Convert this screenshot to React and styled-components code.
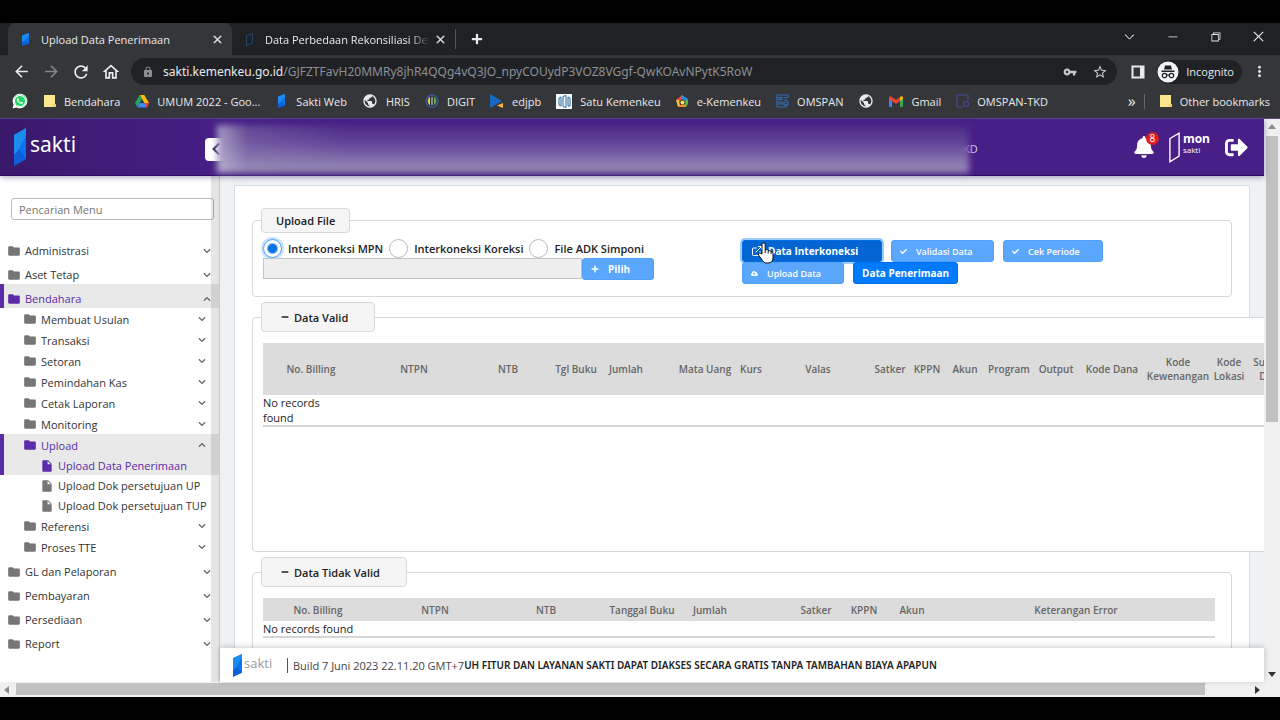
import React from 'react';
import styled, { createGlobalStyle, css } from 'styled-components';
import {
	FaBell,
	FaCheck,
	FaChevronDown,
	FaChevronLeft,
	FaChevronUp,
	FaCloudUploadAlt,
	FaMinus,
	FaPlus,
	FaSignOutAlt,
	FaWhatsapp
} from 'react-icons/fa';
import {
	MdArrowBack,
	MdArrowForward,
	MdFolder,
	MdInsertDriveFile,
	MdLock,
	MdMoreVert,
	MdOutlineHome,
	MdPublic,
	MdRefresh,
	MdStarOutline,
	MdVpnKey
} from 'react-icons/md';
import { VscChevronDown, VscChromeClose, VscChromeMinimize, VscChromeRestore } from 'react-icons/vsc';
import { ExternalLink } from 'lucide-react';

const GlobalStyle = createGlobalStyle`
	* {
		box-sizing: border-box;
	}

	body {
		margin: 0;
		background: #000;
		font-family: 'Open Sans', 'Noto Sans', sans-serif;
		font-size: 12px;
		color: #222;
	}

	button,
	input {
		font-family: inherit;
	}

	ul {
		list-style: none;
		margin: 0;
		padding: 0;
	}

	svg {
		flex: none;
		display: block;
	}
`;

const Screen = styled.div`
	display: flex;
	flex-direction: column;
	height: 100vh;
	padding: 23px 0;
	overflow: hidden;
`;

/* Browser chrome */

const TabStrip = styled.div`
	display: flex;
	align-items: stretch;
	flex: none;
	height: 32px;
	padding-left: 8px;
	background: #202124;
	color: #e8eaed;
`;

const Tab = styled.div`
	display: flex;
	align-items: center;
	width: 224px;
	padding: 0 9px 0 14px;
	border-radius: 8px 8px 0 0;
	background: ${props => (props.$active ? '#35363a' : 'transparent')};
	${props =>
		!props.$active &&
		css`
			border-right: 1px solid #55565a;
			border-radius: 0;
			margin: 6px 0;
		`};
`;

const TabTitle = styled.span`
	flex: 1;
	margin: 0 4px 0 12px;
	overflow: hidden;
	white-space: nowrap;
	font-size: 11px;
	${props =>
		props.$fade &&
		css`
			mask-image: linear-gradient(90deg, #000 88%, transparent);
		`};
`;

const IconButton = styled.button`
	display: flex;
	align-items: center;
	justify-content: center;
	flex: none;
	width: ${props => props.$width || 30}px;
	padding: 0;
	border: 0;
	background: none;
	color: ${props => props.$color || '#e8eaed'};
`;

const WindowButtons = styled.div`
	display: flex;
	margin-left: auto;
	padding-bottom: 6px;
`;

const Toolbar = styled.div`
	display: flex;
	align-items: center;
	flex: none;
	height: 33px;
	padding: 0 4px 0 6px;
	background: #35363a;
	color: #e8eaed;
`;

const AddressBar = styled.div`
	display: flex;
	align-items: center;
	flex: 1;
	height: 27px;
	margin: 0 2px 0 5px;
	padding: 0 2px 0 11px;
	border-radius: 14px;
	background: #202124;
	color: #8c9095;
`;

const Url = styled.span`
	flex: 1;
	margin-left: 9px;
	font-family: 'Noto Sans', sans-serif;
	font-size: 12px;
	white-space: nowrap;

	b {
		font-weight: 400;
		color: #e8eaed;
	}
`;

const Incognito = styled.div`
	display: flex;
	align-items: center;
	gap: 7px;
	height: 24px;
	padding-right: 8px;
	border-radius: 12px;
	background: #202124;
	font-size: 11px;
`;

const BookmarkBar = styled.nav`
	display: flex;
	align-items: center;
	flex: none;
	gap: 15px;
	height: 31px;
	padding: 0 10px 4px 12px;
	border-bottom: 1px solid #5b4a85;
	background: #35363a;
`;

const Bookmark = styled.a`
	display: flex;
	align-items: center;
	gap: 8px;
	color: #e8eaed;
	font-size: 11px;
	text-decoration: none;
	white-space: nowrap;
`;

const BookmarkIcon = styled.span`
	display: flex;
	justify-content: center;
	min-width: 13px;
`;

const BookmarkEnd = styled.div`
	display: flex;
	align-items: center;
	gap: 8px;
	margin-left: auto;
	color: #e8eaed;
	font-size: 16px;
`;

const Divider = styled.span`
	width: 1px;
	height: ${props => props.$height}px;
	background: ${props => props.$color};
`;

/* Application */

const Viewport = styled.div`
	display: flex;
	flex: 1;
	min-height: 0;
`;

const Page = styled.div`
	display: flex;
	flex-direction: column;
	flex: 1;
	min-width: 0;
	background: #fff;
`;

const Header = styled.header`
	position: relative;
	z-index: 2;
	display: flex;
	align-items: center;
	flex: none;
	height: 57px;
	padding-right: 16px;
	background: linear-gradient(90deg, #38196a 0, #471f87 220px, #471f87 100%);
	border-bottom: 1px solid #2c0b63;
	box-shadow: 0 1px 6px rgba(60, 40, 110, 0.45);
	color: #fff;
`;

const Brand = styled.div`
	display: flex;
	align-items: center;
	gap: 4px;
	width: 205px;
	padding-left: 14px;
	font-family: 'Noto Sans', sans-serif;
	font-size: 21px;

	span {
		padding-bottom: 7px;
	}
`;

const MenuToggle = styled.button`
	display: flex;
	align-items: center;
	justify-content: center;
	width: 22px;
	height: 23px;
	margin-top: 4px;
	padding: 0;
	border: 0;
	border-radius: 4px;
	background: #fff;
	color: #2f2360;
`;

const BlurBand = styled.div`
	flex: 1;
	max-width: 752px;
	height: 48px;
	margin: 3px 0 0 -10px;
	background:
		linear-gradient(90deg, rgba(190, 182, 210, 0.8), rgba(150, 140, 185, 0.3) 30px, transparent 130px),
		linear-gradient(#4b2885, #64479a 40%, #8674ad 75%, #9c8eb8);
	filter: blur(3px);
`;

const HeaderActions = styled.div`
	display: flex;
	align-items: center;
	gap: 14px;
	margin-left: auto;
`;

const Account = styled.span`
	margin: 3px 0 0 -14px;
	font-size: 11px;
	color: #d9cfee;
`;

const Bell = styled.button`
	position: relative;
	padding: 0;
	border: 0;
	background: none;
	color: #fff;
`;

const Badge = styled.span`
	position: absolute;
	top: -4px;
	right: -4px;
	width: 13px;
	height: 13px;
	border-radius: 50%;
	background: #e01b24;
	font-size: 10px;
	line-height: 13px;
	text-align: center;
`;

const MonSakti = styled.a`
	display: flex;
	gap: 3px;
	color: #fff;
	text-decoration: none;
	font-size: 8px;

	small,
	strong {
		display: block;
		font-size: 12px;
		font-weight: 700;
		line-height: 14px;
	}

	small {
		font-size: 8px;
		font-weight: 400;
		line-height: 8px;
	}
`;

const Body = styled.div`
	display: flex;
	flex: 1;
	min-height: 0;
`;

const Sidebar = styled.aside`
	position: relative;
	flex: none;
	width: 220px;
	padding-top: 22px;
	border-right: 1px solid #c9c9c9;
	background: #fff;

	&::after {
		content: '';
		position: absolute;
		top: 0;
		right: 0;
		bottom: 0;
		width: 8px;
		background: rgba(0, 0, 0, 0.1);
		pointer-events: none;
	}
`;

const SearchInput = styled.input`
	display: block;
	width: 203px;
	height: 22px;
	margin: 0 0 16px 11px;
	padding: 0 7px;
	border: 1px solid #bdbdbd;
	border-radius: 3px;
	font-size: 11px;

	&::placeholder {
		color: #757575;
	}
`;

const levels = {
	1: css`
		height: 24px;
		padding: 5px 8px 0 7px;
	`,
	2: css`
		height: 21px;
		padding: 1px 13px 0 23px;
	`,
	3: css`
		height: 20px;
		padding: 1px 13px 0 40px;
	`
};

const MenuLink = styled.a`
	display: flex;
	align-items: center;
	gap: 4px;
	${props => levels[props.$level]};
	color: ${props => (props.$active ? '#5a2ca8' : '#333')};
	background: ${props => (props.$active ? '#e9e9e9' : 'transparent')};
	font-size: 11px;
	white-space: nowrap;
	text-decoration: none;

	${props =>
		props.$active &&
		css`
			box-shadow: inset 4px 0 0 #5a2ca8;
		`};

	> svg:first-child {
		color: ${props => (props.$active ? '#5a2ca8' : '#757575')};
	}

	> svg:nth-of-type(2) {
		margin-left: auto;
		color: #666;
	}
`;

const Main = styled.main`
	display: flex;
	flex-direction: column;
	flex: 1;
	min-width: 0;
	background: #eef2f5;
`;

const Content = styled.div`
	flex: 1;
	min-height: 0;
	padding: 9px 14px 0;
	overflow: hidden;
`;

const Card = styled.div`
	min-height: 100%;
	padding: 22px 17px;
	border: 1px solid #d5dde2;
	background: #fff;
`;

const Panel = styled.fieldset`
	width: ${props => (props.$wide ? 'max-content' : 'auto')};
	margin: 0 0 5px;
	padding: 0 16px ${props => props.$bottom || 12}px 8px;
	border: 1px solid #d9d9d9;
	border-radius: 4px;
	background: #fff;
`;

const PanelTitle = styled.legend`
	padding: 0 14px;
	border: 1px solid #d9d9d9;
	border-radius: 4px;
	background: #f5f5f5;
	color: #212121;
	font-size: 11px;
	font-weight: 600;
	line-height: 23px;
`;

const PanelToggle = styled.button`
	display: flex;
	align-items: center;
	gap: 5px;
	height: 28px;
	padding: 0 12px 0 5px;
	border: 0;
	background: none;
	color: inherit;
	font-size: 11px;
	font-weight: 600;
`;

const PanelBody = styled.div`
	padding: ${props => props.$top}px 0 0 2px;
`;

const Form = styled.form`
	display: grid;
	grid-template-columns: 479px 1fr;
`;

const Actions = styled.div`
	padding-top: 2px;
`;

const RadioRow = styled.div`
	display: flex;
	align-items: center;
	gap: 6px;
	height: 20px;
	white-space: nowrap;
`;

const Radio = styled.input`
	appearance: none;
	flex: none;
	width: 19px;
	height: 19px;
	margin: 0;
	border: 1px solid #bbb;
	border-radius: 50%;
	background: #fff;

	&:checked {
		border-color: #4b9bf0;
		background: radial-gradient(#0b74e5 0 4px, #fff 6px);
		box-shadow: 0 0 0 2px #c4e0ff;
	}
`;

const RadioLabel = styled.label`
	font-size: 11px;
	font-weight: 600;
`;

const FileRow = styled.div`
	display: flex;
`;

const FileName = styled.input`
	width: 319px;
	height: 21px;
	padding: 0 6px;
	border: 1px solid #c4c4c4;
	background: #eee;
`;

const ActionRow = styled.div`
	display: flex;
	gap: 9px;
	height: 22px;
`;

const Button = styled.button`
	position: relative;
	display: flex;
	align-items: center;
	flex: none;
	gap: ${props => props.$gap || 9}px;
	width: ${props => props.$width}px;
	height: 22px;
	padding: 0 8px;
	border: 1px solid ${props => (props.$strong ? '#006fe6' : '#4fa0fb')};
	border-radius: 3px;
	background: ${props => (props.$strong ? '#007bff' : '#5ba7fd')};
	color: #fff;
	font-size: ${props => props.$size || 9}px;
	font-weight: ${props => (props.$size ? 700 : 600)};
	white-space: nowrap;

	${props =>
		props.$focused &&
		css`
			background: #0364d2;
			box-shadow: 0 0 0 2px #9dccff;
		`};
`;

const Cursor = styled.svg`
	position: absolute;
	left: 14px;
	top: 0;
	z-index: 1;
`;

const Table = styled.table`
	width: ${props => (props.$width ? `${props.$width}px` : '100%')};
	table-layout: fixed;
	border-collapse: collapse;
	border-bottom: 2px solid #d6d6d6;

	th {
		height: ${props => props.$head}px;
		padding: 0;
		background: #dcdcdc;
		color: #666;
		font-size: 10px;
		font-weight: 600;
		line-height: 14px;
	}

	td {
		padding: 0 12px 0 0;
		font-size: 11px;
		line-height: 15px;
	}
`;

const Th = styled.th`
	width: ${props => (props.$width ? `${props.$width}px` : 'auto')};
	text-align: ${props => (props.$left ? 'left' : 'center')};

	&& {
		padding-left: ${props => (props.$left ? 4 : 0)}px;
	}
`;

const Footer = styled.footer`
	position: relative;
	display: flex;
	align-items: center;
	flex: none;
	height: 34px;
	padding-left: 13px;
	background: #fff;
	box-shadow: 0 -1px 6px rgba(0, 0, 0, 0.2);
	font-size: 11px;
	white-space: nowrap;

	strong {
		font-family: 'Noto Sans', sans-serif;
		font-size: 10px;
		font-weight: 600;
	}
`;

const FooterBrand = styled.span`
	width: 45px;
	padding: 0 0 4px 2px;
	color: #9a9aa2;
	font-size: 13px;
`;

const Build = styled.span`
	margin-left: 5px;
	color: #444;
`;

const VerticalBar = styled.div`
	display: flex;
	flex-direction: column;
	align-items: center;
	flex: none;
	width: 16px;
	padding: 4px 0;
	background: #f0f0f0;
`;

const HorizontalBar = styled.div`
	display: flex;
	align-items: center;
	flex: none;
	height: 15px;
	padding: 0 19px 0 3px;
	background: #f0f0f0;
`;

const Thumb = styled.span`
	flex: ${props => props.$grow};
	align-self: stretch;
	margin: ${props => (props.$vertical ? '5px 2px 0' : '1px 0 2px')};
	background: #c1c1c1;
`;

const Track = styled.span`
	flex: ${props => props.$grow};
`;

const SaktiMark = ({ width, height, outline }) => (
	<svg width={width} height={height} viewBox="0 0 12 38" preserveAspectRatio="none" aria-hidden="true">
		{outline ? (
			<path d="M1 8 11 1.5v28L1 36.500z" fill="none" stroke={outline} strokeWidth="1.500" />
		) : (
			<>
				<path d="M0 7 12 0v31L0 38z" fill="#0d5fdc" />
				<path d="M0 7 12 0v8L5 21 0 27z" fill="#1c8df0" />
				<path d="M12 8v23L5 21z" fill="#0a74ee" />
			</>
		)}
	</svg>
);

const NoteIcon = () => (
	<svg width="12" height="14" viewBox="0 0 12 14" aria-hidden="true">
		<path d="M0 1h11v9h1v3H0z" fill="#fbe58d" />
		<path d="M9 10h3v3H9z" fill="#f2cf5b" />
	</svg>
);

const DriveIcon = () => (
	<svg width="14" height="13" viewBox="0 0 14 13" aria-hidden="true">
		<path d="M4.700 0h4.600l4.700 8H9.400z" fill="#fbbc04" />
		<path d="M4.700 0 7 4 2.300 12 0 8z" fill="#1fa463" />
		<path d="M4.600 8H14l-2.300 4.500H2.300z" fill="#4285f4" />
		<path d="M9.400 8H14l-2.300 4.500z" fill="#ea4335" />
	</svg>
);

const GmailIcon = () => (
	<svg width="14" height="11" viewBox="0 0 14 11" aria-hidden="true">
		<path d="M0 2h3v9H1a1 1 0 0 1-1-1z" fill="#4285f4" />
		<path d="M11 2h3v8a1 1 0 0 1-1 1h-2z" fill="#34a853" />
		<path d="M0 2C0 0 2 0 3 1l4 3 4-3v4L7 8 0 3z" fill="#ea4335" />
		<path d="M11 1c1-1 3-1 3 1v1l-3 2z" fill="#fbbc04" />
	</svg>
);

const WhatsappIcon = () => (
	<svg width="16" height="16" viewBox="0 0 16 16" aria-hidden="true">
		<path d="M.5 15.500 1.600 11.500A7.300 7.300 0 1 1 4.500 14.400z" fill="#fff" />
		<circle cx="8.200" cy="7.800" r="6.300" fill="#25d366" />
		<g color="#fff">
			<FaWhatsapp x="1" y="1" size={14} />
		</g>
	</svg>
);

const DigitIcon = () => (
	<svg width="14" height="14" viewBox="0 0 14 14" fill="none" aria-hidden="true">
		<circle cx="7" cy="7" r="6" stroke="#39559c" strokeWidth="1.500" />
		<path d="M5 3C2 5 2 9 5 11z" fill="#e3d93e" />
		<path d="M9 3c3 2 3 6 0 8z" fill="#64b445" />
		<path d="M7 3v8" stroke="#dbe3ee" />
	</svg>
);

const EdjpbIcon = () => (
	<svg width="14" height="14" viewBox="0 0 14 14" aria-hidden="true">
		<path d="M0 0 12 7 0 14z" fill="#1769c4" />
		<path d="M13 9v5L7 11.500z" fill="#f5b53c" />
	</svg>
);

const SatuIcon = () => (
	<svg width="16" height="15" viewBox="0 0 16 15" fill="none" aria-hidden="true">
		<path d="M0 0h16v15H0z" fill="#f4f8fb" />
		<path d="M3 4 5 3v9l-2-1zM7 2.500l3-1v12l-3-1zM12 3l2 1v8h-2z" stroke="#246c9f" />
	</svg>
);

const EKemenkeuIcon = () => (
	<svg width="13" height="14" viewBox="0 0 13 14" aria-hidden="true">
		<path d="M6 1 12 5 9 7 6 5z" fill="#2b8ed8" />
		<path d="M6 1 0 6l2 3 4-4z" fill="#e84b3b" />
		<path d="M0 6h3l1 6-2 1z" fill="#f4c430" />
		<path d="M2 13h8l1-3-7 1z" fill="#f08a24" />
		<path d="M12 5v5l-2 3-1-6z" fill="#53b848" />
		<circle cx="6.500" cy="8.500" r="2" fill="#f5dd55" />
	</svg>
);

const OmspanIcon = () => (
	<svg width="13" height="14" viewBox="0 0 13 14" fill="none" stroke="#2c6fb7" strokeWidth="1.200" aria-hidden="true">
		<path d="M12 4V1H1v12h9v-2M3 3.500h3v2H3zM8 3.500h3M8 6h4M3 8h3v2H3zM8 8h4v3H8z" />
	</svg>
);

const OmspanTkdIcon = () => (
	<svg width="13" height="14" viewBox="0 0 13 14" fill="none" stroke="#42489c" strokeWidth="1.200" aria-hidden="true">
		<path d="M12 6V1H1v12h6" />
		<circle cx="10" cy="10" r="2.500" />
	</svg>
);

const IncognitoIcon = () => (
	<svg width="22" height="22" viewBox="0 0 22 22" aria-hidden="true">
		<circle cx="11" cy="11" r="10.500" fill="#f1f3f4" />
		<path d="M8 4.500h6l1 4H7zM4.500 9.500h13V11h-13z" fill="#202124" />
		<g fill="none" stroke="#202124" strokeWidth="1.200">
			<circle cx="7.500" cy="14.500" r="2.200" />
			<circle cx="14.500" cy="14.500" r="2.200" />
			<path d="M9.700 14h2.600" />
		</g>
	</svg>
);

const SidePanelIcon = () => (
	<svg width="14" height="14" viewBox="0 0 14 14" aria-hidden="true">
		<path d="M1.500 1.500h11v11h-11z" fill="none" stroke="#e8eaed" strokeWidth="2" />
		<path d="M9 1h4v12H9z" fill="#e8eaed" />
	</svg>
);

const Arrow = ({ dir }) => {
	const paths = { up: 'M0 6 4 1l4 5z', down: 'M0 2h8L4 7z', left: 'M6 0v8L1 4z', right: 'M2 0v8l5-4z' };
	const dim = dir === 'up' || dir === 'left';
	return (
		<svg width="8" height="8" viewBox="0 0 8 8" aria-hidden="true">
			<path d={paths[dir]} fill={dim ? '#8a8a8a' : '#333'} />
		</svg>
	);
};

const bookmarks = [
	{ icon: <WhatsappIcon />, title: 'WhatsApp' },
	{ icon: <NoteIcon />, label: 'Bendahara' },
	{ icon: <DriveIcon />, label: 'UMUM 2022 - Goo...' },
	{ icon: <SaktiMark width={7} height={14} />, label: 'Sakti Web' },
	{ icon: <MdPublic size={16} />, label: 'HRIS' },
	{ icon: <DigitIcon />, label: 'DIGIT' },
	{ icon: <EdjpbIcon />, label: 'edjpb' },
	{ icon: <SatuIcon />, label: 'Satu Kemenkeu' },
	{ icon: <EKemenkeuIcon />, label: 'e-Kemenkeu' },
	{ icon: <OmspanIcon />, label: 'OMSPAN' },
	{ icon: <MdPublic size={16} />, title: 'Web' },
	{ icon: <GmailIcon />, label: 'Gmail' },
	{ icon: <OmspanTkdIcon />, label: 'OMSPAN-TKD' }
];

const menu = [
	{ level: 1, label: 'Administrasi' },
	{ level: 1, label: 'Aset Tetap' },
	{ level: 1, label: 'Bendahara', active: true },
	{ level: 2, label: 'Membuat Usulan' },
	{ level: 2, label: 'Transaksi' },
	{ level: 2, label: 'Setoran' },
	{ level: 2, label: 'Pemindahan Kas' },
	{ level: 2, label: 'Cetak Laporan' },
	{ level: 2, label: 'Monitoring' },
	{ level: 2, label: 'Upload', active: true },
	{ level: 3, label: 'Upload Data Penerimaan', active: true },
	{ level: 3, label: 'Upload Dok persetujuan UP' },
	{ level: 3, label: 'Upload Dok persetujuan TUP' },
	{ level: 2, label: 'Referensi' },
	{ level: 2, label: 'Proses TTE' },
	{ level: 1, label: 'GL dan Pelaporan' },
	{ level: 1, label: 'Pembayaran' },
	{ level: 1, label: 'Persediaan' },
	{ level: 1, label: 'Report' }
];

const sources = ['Interkoneksi MPN', 'Interkoneksi Koreksi', 'File ADK Simponi'];

const validColumns = [
	{ label: 'No. Billing', width: 96 },
	{ label: 'NTPN', width: 110 },
	{ label: 'NTB', width: 78 },
	{ label: 'Tgl Buku', width: 58 },
	{ label: 'Jumlah', width: 69, left: true },
	{ label: 'Mata Uang', width: 62 },
	{ label: 'Kurs', width: 30 },
	{ label: 'Valas', width: 104 },
	{ label: 'Satker', width: 40 },
	{ label: 'KPPN', width: 34 },
	{ label: 'Akun', width: 42 },
	{ label: 'Program', width: 46 },
	{ label: 'Output', width: 48 },
	{ label: 'Kode Dana', width: 64 },
	{ label: 'Kode Kewenangan', width: 68 },
	{ label: 'Kode Lokasi', width: 34 },
	{ label: 'Sumber Dana', width: 52 }
];

const invalidColumns = [
	{ label: 'No. Billing', width: 110 },
	{ label: 'NTPN', width: 124 },
	{ label: 'NTB', width: 98 },
	{ label: 'Tanggal Buku', width: 94 },
	{ label: 'Jumlah', width: 102, left: true },
	{ label: 'Satker', width: 50 },
	{ label: 'KPPN', width: 46 },
	{ label: 'Akun', width: 50 },
	{ label: 'Keterangan Error' }
];

const MenuItem = ({ level, label, active }) => {
	const Icon = level === 3 ? MdInsertDriveFile : MdFolder;
	const Chevron = active ? FaChevronUp : FaChevronDown;
	return (
		<li>
			<MenuLink href="#" $level={level} $active={active}>
				<Icon size={14} />
				{label}
				{level < 3 && <Chevron size={8} />}
			</MenuLink>
		</li>
	);
};

const DataTable = ({ columns, width, head, span }) => (
	<Table $width={width} $head={head}>
		<thead>
			<tr>
				{columns.map(column => (
					<Th key={column.label} $width={column.width} $left={column.left}>
						{column.label}
					</Th>
				))}
			</tr>
		</thead>
		<tbody>
			<tr>
				<td colSpan={span}>No records found</td>
			</tr>
		</tbody>
	</Table>
);

const Browser = () => (
	<>
		<TabStrip>
			<Tab $active>
				<SaktiMark width={7} height={13} />
				<TabTitle>Upload Data Penerimaan</TabTitle>
				<IconButton $width={12} aria-label="Close tab">
					<VscChromeClose size={11} strokeWidth={1} />
				</IconButton>
			</Tab>
			<Tab>
				<SaktiMark width={7} height={13} outline="#1d5c94" />
				<TabTitle $fade>Data Perbedaan Rekonsiliasi Detail</TabTitle>
				<IconButton $width={12} aria-label="Close tab">
					<VscChromeClose size={11} strokeWidth={1} />
				</IconButton>
			</Tab>
			<IconButton $width={42} aria-label="New tab">
				<FaPlus size={12} />
			</IconButton>
			<WindowButtons>
				<IconButton $width={43} aria-label="Search tabs">
					<VscChevronDown size={15} />
				</IconButton>
				<IconButton $width={43} aria-label="Minimize">
					<VscChromeMinimize size={13} />
				</IconButton>
				<IconButton $width={43} aria-label="Restore">
					<VscChromeRestore size={13} />
				</IconButton>
				<IconButton $width={43} aria-label="Close">
					<VscChromeClose size={15} />
				</IconButton>
			</WindowButtons>
		</TabStrip>
		<Toolbar>
			<IconButton aria-label="Back">
				<MdArrowBack size={19} />
			</IconButton>
			<IconButton $color="#85868a" aria-label="Forward">
				<MdArrowForward size={19} />
			</IconButton>
			<IconButton aria-label="Reload">
				<MdRefresh size={20} />
			</IconButton>
			<IconButton aria-label="Home">
				<MdOutlineHome size={20} />
			</IconButton>
			<AddressBar>
				<MdLock size={12} />
				<Url>
					<b>sakti.kemenkeu.go.id</b>/GJFZTFavH20MMRy8jhR4QQg4vQ3JO_npyCOUydP3VOZ8VGgf-QwKOAvNPytK5RoW
				</Url>
				<IconButton $color="#c4c7cb" aria-label="Passwords">
					<MdVpnKey size={14} />
				</IconButton>
				<IconButton $color="#c4c7cb" aria-label="Bookmark this page">
					<MdStarOutline size={16} />
				</IconButton>
			</AddressBar>
			<IconButton $width={38} aria-label="Side panel">
				<SidePanelIcon />
			</IconButton>
			<Incognito>
				<IncognitoIcon />
				Incognito
			</Incognito>
			<IconButton $width={34} aria-label="Menu">
				<MdMoreVert size={17} />
			</IconButton>
		</Toolbar>
		<BookmarkBar>
			{bookmarks.map((item, index) => (
				<Bookmark key={index} href="#" aria-label={item.label || item.title}>
					<BookmarkIcon>{item.icon}</BookmarkIcon>
					{item.label}
				</Bookmark>
			))}
			<BookmarkEnd>
				»
				<Divider $height={15} $color="#65666a" />
			</BookmarkEnd>
			<Bookmark href="#">
				<NoteIcon />
				Other bookmarks
			</Bookmark>
		</BookmarkBar>
	</>
);

const UploadForm = () => (
	<Form>
		<div>
			<RadioRow>
				{sources.map((source, index) => (
					<React.Fragment key={source}>
						<Radio type="radio" name="source" id={`source-${index}`} defaultChecked={index === 0} />
						<RadioLabel htmlFor={`source-${index}`}>{source}</RadioLabel>
					</React.Fragment>
				))}
			</RadioRow>
			<FileRow>
				<FileName readOnly aria-label="Nama file" />
				<Button type="button" $width={72} $size={10}>
					<FaPlus size={8} />
					Pilih
				</Button>
			</FileRow>
		</div>
		<Actions>
			<ActionRow>
				<Button type="button" $width={140} $size={10} $gap={5} $strong $focused>
					<ExternalLink size={12} />
					Data Interkoneksi
					<Cursor width="18" height="24" viewBox="0 0 18 24" aria-hidden="true">
						<path
							d="M5 13V3.500a1.600 1.600 0 0 1 3.200 0V9l1-.3a1.500 1.500 0 0 1 2 1l1-.1a1.500 1.500 0 0 1 1.800 1.200c1-.2 2 .4 2 1.500V17c0 3-2 5-5 5H9.500c-2 0-3-1-4-2.500L1.500 14c-.6-1.500 1-2.500 2.200-1.500z"
							fill="#fff"
							stroke="#111"
						/>
						<path d="M8.200 9v3M11.200 10v2.500M14 11v2" stroke="#111" fill="none" />
					</Cursor>
				</Button>
				<Button type="button" $width={103}>
					<FaCheck size={7} />
					Validasi Data
				</Button>
				<Button type="button" $width={100}>
					<FaCheck size={7} />
					Cek Periode
				</Button>
			</ActionRow>
			<ActionRow>
				<Button type="button" $width={102}>
					<FaCloudUploadAlt size={7} />
					Upload Data
				</Button>
				<Button type="button" $width={105} $size={10} $strong>
					Data Penerimaan
				</Button>
			</ActionRow>
		</Actions>
	</Form>
);

/**
 * Upload Data Penerimaan screen
 */
const App = () => (
	<Screen>
		<GlobalStyle />
		<Browser />
		<Viewport>
			<Page>
				<Header>
					<Brand>
						<SaktiMark width={12} height={38} />
						<span>sakti</span>
					</Brand>
					<MenuToggle aria-label="Tutup menu">
						<FaChevronLeft size={14} />
					</MenuToggle>
					<BlurBand />
					<Account>DKD</Account>
					<HeaderActions>
						<Bell aria-label="Notifikasi">
							<FaBell size={22} />
							<Badge>8</Badge>
						</Bell>
						<MonSakti href="#">
							<SaktiMark width={11} height={31} outline="#fff" />
							<span>
								<strong>mon</strong>
								<small>sakti</small>
							</span>
						</MonSakti>
						<IconButton $width={24} $color="#fff" aria-label="Keluar">
							<FaSignOutAlt size={23} />
						</IconButton>
					</HeaderActions>
				</Header>
				<Body>
					<Sidebar>
						<SearchInput type="text" placeholder="Pencarian Menu" aria-label="Pencarian Menu" />
						<ul>
							{menu.map(item => (
								<MenuItem key={item.label} {...item} />
							))}
						</ul>
					</Sidebar>
					<Main>
						<Content>
							<Card>
								<Panel>
									<PanelTitle>Upload File</PanelTitle>
									<PanelBody $top={5}>
										<UploadForm />
									</PanelBody>
								</Panel>
								<Panel $wide $bottom={124}>
									<PanelTitle>
										<PanelToggle type="button">
											<FaMinus size={8} />
											Data Valid
										</PanelToggle>
									</PanelTitle>
									<PanelBody $top={11}>
										<DataTable columns={validColumns} width={1035} head={52} span={1} />
									</PanelBody>
								</Panel>
								<Panel $bottom={80}>
									<PanelTitle>
										<PanelToggle type="button">
											<FaMinus size={8} />
											Data Tidak Valid
										</PanelToggle>
									</PanelTitle>
									<PanelBody $top={11}>
										<DataTable columns={invalidColumns} head={23} span={9} />
									</PanelBody>
								</Panel>
							</Card>
						</Content>
						<Footer>
							<SaktiMark width={9} height={23} />
							<FooterBrand>sakti</FooterBrand>
							<Divider $height={15} $color="#555" />
							<Build>Build 7 Juni 2023 22.11.20 GMT+7</Build>
							<strong>UH FITUR DAN LAYANAN SAKTI DAPAT DIAKSES SECARA GRATIS TANPA TAMBAHAN BIAYA APAPUN</strong>
						</Footer>
					</Main>
				</Body>
			</Page>
			<VerticalBar aria-hidden="true">
				<Arrow dir="up" />
				<Thumb $grow={285} $vertical />
				<Track $grow={247} />
				<Arrow dir="down" />
			</VerticalBar>
		</Viewport>
		<HorizontalBar aria-hidden="true">
			<Arrow dir="left" />
			<Track $grow={5} />
			<Thumb $grow={1187} />
			<Track $grow={48} />
			<Arrow dir="right" />
		</HorizontalBar>
	</Screen>
);

export default App;
